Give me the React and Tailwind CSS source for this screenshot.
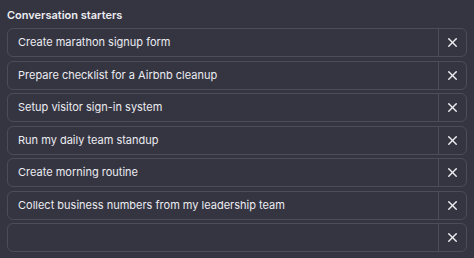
import { X } from 'lucide-react'

const STARTERS = [
  'Create marathon signup form',
  'Prepare checklist for a Airbnb cleanup',
  'Setup visitor sign-in system',
  'Run my daily team standup',
  'Create morning routine',
  'Collect business numbers from my leadership team',
  '',
]

function StarterRow({ text }) {
  return (
    <div className="flex h-[29px] items-stretch rounded-md border border-[#4c4d59] bg-[#353541]">
      <div className="flex flex-1 items-center px-[10px] text-[11px] text-[#ececf1]">{text}</div>
      <button className="flex w-[28px] items-center justify-center border-l border-[#4c4d59] text-[#ececf1]">
        <X size={15} strokeWidth={2.2} />
      </button>
    </div>
  )
}

export default function App() {
  return (
    <div
      className="h-[258px] w-[474px] bg-[#343541] px-[7px] pt-[7px]"
      style={{ fontFamily: 'Inter, "Noto Sans", sans-serif' }}
    >
      <div className="mb-[5px] text-[11px] font-semibold leading-[16px] text-[#ececf1]">Conversation starters</div>
      <div className="flex flex-col gap-[3.5px]">
        {STARTERS.map((s, i) => (
          <StarterRow key={i} text={s} />
        ))}
      </div>
    </div>
  )
}
